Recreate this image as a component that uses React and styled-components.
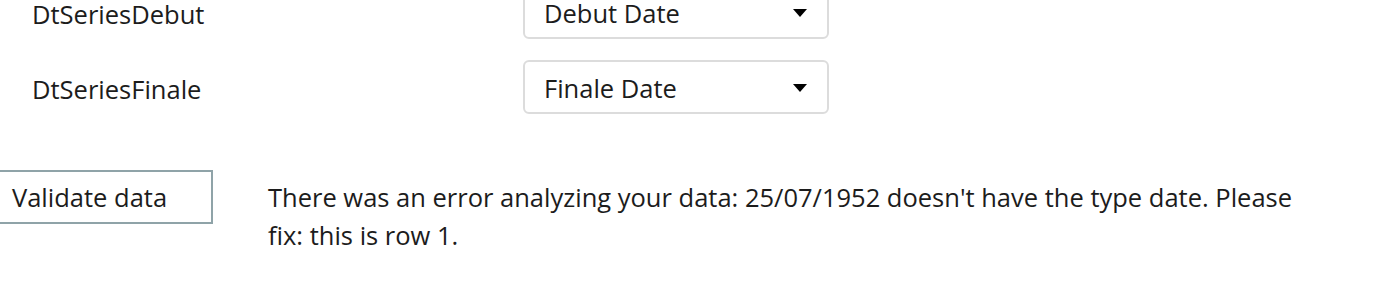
import React from "react";
import styled, { createGlobalStyle } from "styled-components";

const GlobalStyle = createGlobalStyle`
  html, body {
    margin: 0;
    padding: 0;
    background: #ffffff;
    overflow: hidden;
  }
  body {
    font-family: "Open Sans", "Noto Sans", sans-serif;
    color: #1c1c1c;
  }
`;

const fields = [
  { name: "DtSeriesDebut", value: "Debut Date" },
  { name: "DtSeriesFinale", value: "Finale Date" },
];

export default function App() {
  return (
    <>
      <GlobalStyle />
      <Page>
        <FieldList>
          {fields.map((f) => (
            <FieldRow key={f.name}>
              <Label>{f.name}</Label>
              <Select>
                <span>{f.value}</span>
                <Caret viewBox="0 0 14 8" aria-hidden="true">
                  <path d="M0 0 H14 L7 8 Z" fill="#000" />
                </Caret>
              </Select>
            </FieldRow>
          ))}
        </FieldList>
        <Actions>
          <ValidateButton>Validate data</ValidateButton>
          <Message>
            There was an error analyzing your data: 25/07/1952 doesn't have the
            type date. Please fix: this is row 1.
          </Message>
        </Actions>
      </Page>
    </>
  );
}

const Page = styled.div`
  margin-top: -15px;
  font-size: 25.5px;
`;

const FieldList = styled.div`
  display: flex;
  flex-direction: column;
  gap: 21px;
  padding-left: 32px;
`;

const FieldRow = styled.div`
  display: grid;
  grid-template-columns: 491px 306px;
  align-items: center;
`;

const Label = styled.div`
  line-height: 34px;
  padding-top: 4px;
`;

const Select = styled.div`
  box-sizing: border-box;
  height: 54px;
  border: 2px solid #dcdcdc;
  border-radius: 6px;
  display: flex;
  align-items: center;
  justify-content: space-between;
  padding: 0 20px 0 19px;
  span {
    line-height: 34px;
    padding-top: 2px;
  }
`;

const Caret = styled.svg`
  width: 14px;
  height: 8px;
  margin-top: 1px;
`;

const Actions = styled.div`
  display: flex;
  align-items: flex-start;
  gap: 55px;
  margin-top: 56px;
`;

const ValidateButton = styled.button`
  box-sizing: border-box;
  flex: none;
  width: 215px;
  height: 54px;
  margin-left: -2px;
  padding: 0 0 0 12px;
  text-align: left;
  background: #ffffff;
  border: 2px solid #8fa3a8;
  border-radius: 0;
  font-family: inherit;
  font-size: 25.5px;
  color: #1c1c1c;
`;

const Message = styled.p`
  margin: 8px 0 0;
  max-width: 1050px;
  line-height: 38px;
`;
